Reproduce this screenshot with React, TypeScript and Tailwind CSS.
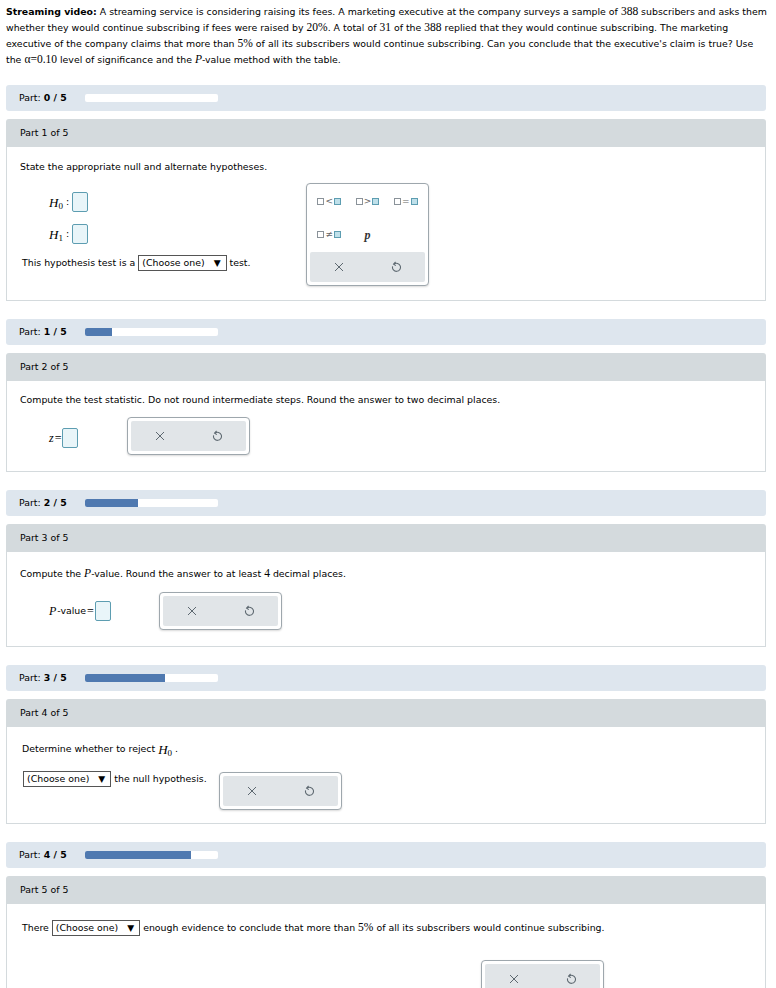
import React from 'react';

const serif = "font-['Liberation_Serif',serif] leading-none";
const num = `${serif} text-[11.5px]`;

// Progress strip shown above each part
const Progress: React.FC<{ done: number }> = ({ done }) => (
  <div className="h-[26px] rounded-[3px] bg-[#dee6ee] flex items-center pl-[13px]">
    <span className="w-[66px]">
      Part: <b>{done} / 5</b>
    </span>
    <div className="w-[133px] h-[8px] bg-white rounded-[2px] overflow-hidden">
      <div className="h-full bg-[#4f79b0]" style={{ width: `${(done / 5) * 100}%` }} />
    </div>
  </div>
);

const AnswerBox: React.FC = () => (
  <span className="inline-block w-[16px] h-[20px] rounded-[2px] border border-[#5d9db1] bg-[#e9f5f9] align-middle" />
);

const Choose: React.FC = () => (
  <span className="inline-flex items-center h-[16px] border border-[#555] pl-[3px] pr-[5px] gap-[9px] align-middle">
    <span>(Choose one)</span>
    <span className="text-[9px]">▼</span>
  </span>
);

const XIcon = () => (
  <svg width="10" height="10" viewBox="0 0 10 10" className="text-[#5d6870]">
    <path d="M1 1 L9 9 M9 1 L1 9" stroke="currentColor" strokeWidth="1" fill="none" />
  </svg>
);

const UndoIcon = () => (
  <svg width="10" height="12" viewBox="0 0 10 12" className="text-[#5d6870]">
    <path d="M3 3.2 A4 4 0 1 1 1.6 5.4" stroke="currentColor" strokeWidth="1.1" fill="none" />
    <path d="M4.6 1 L2.6 3.1 L4.8 4.6" stroke="currentColor" strokeWidth="1.1" fill="none" />
  </svg>
);

const ButtonBar: React.FC = () => (
  <div className="h-[30px] bg-[#e1e5e8] rounded-[2px] flex items-center justify-around">
    <XIcon />
    <UndoIcon />
  </div>
);

const Palette: React.FC<{ className?: string; children?: React.ReactNode }> = ({ className = '', children }) => (
  <div className={`w-[123px] border border-[#9ea7ad] rounded-[4px] p-[3px] shadow-[0_1px_2px_rgba(0,0,0,0.15)] bg-white ${className}`}>
    {children}
    <ButtonBar />
  </div>
);

const Sq: React.FC<{ teal?: boolean }> = ({ teal }) => (
  <span
    className={`inline-block w-[7px] h-[7px] border ${
      teal ? 'border-[#5d9db1] bg-[#bfe0ea]' : 'border-[#8a9299] bg-white'
    }`}
  />
);

const Rel: React.FC<{ op: string }> = ({ op }) => (
  <span className="inline-flex items-center gap-[1px] text-[#666] text-[9px] h-[9px]">
    <Sq />
    <span className="leading-none">{op}</span>
    <Sq teal />
  </span>
);

const Section: React.FC<{ done: number; n: number; children: React.ReactNode; last?: boolean }> = ({
  done,
  n,
  children,
  last,
}) => (
  <div className={last ? '' : 'mb-[18px]'}>
    <Progress done={done} />
    <div className="mt-[8px] h-[28px] bg-[#d4dadd] rounded-t-[3px] flex items-center pl-[14px]">
      Part {n} of 5
    </div>
    <div className="border border-t-0 border-[#d4dadd]">{children}</div>
  </div>
);

const H: React.FC<{ sub: string }> = ({ sub }) => (
  <span className={`${serif} italic text-[13px]`}>
    H<sub className="text-[9px] not-italic">{sub}</sub>
  </span>
);

export default function App() {
  return (
    <div className="pl-[6px] pr-[10px] pt-[4px] font-['DejaVu_Sans',sans-serif] text-[9.4px] text-black leading-4 bg-white min-h-[988px]">
      <p className="leading-[16px] -mr-[3px]">
        <b>Streaming video:</b> A streaming service is considering raising its fees. A marketing executive at the company
        surveys a sample of <span className={num}>388</span> subscribers and asks them whether they would continue
        subscribing if fees were raised by <span className={num}>20%</span>. A total of <span className={num}>31</span> of
        the <span className={num}>388</span> replied that they would continue subscribing. The marketing executive of the
        company claims that more than <span className={num}>5%</span> of all its subscribers would continue subscribing. Can
        you conclude that the executive's claim is true? Use the <span className={num}>α=0.10</span> level of significance
        and the <span className={`${num} italic`}>P</span>-value method with the table.
      </p>

      <div className="mt-[17px]">
        <Section done={0} n={1}>
          <div className="pl-[13px] pt-[12px] pb-[14px] flex">
            <div className="w-[286px]">
              <p>State the appropriate null and alternate hypotheses.</p>
              <div className="mt-[16px] pl-[29px] flex items-center gap-[3px] h-[22px]">
                <H sub="0" />
                <span>:</span>
                <AnswerBox />
              </div>
              <div className="mt-[10px] pl-[29px] flex items-center gap-[3px] h-[22px]">
                <H sub="1" />
                <span>:</span>
                <AnswerBox />
              </div>
              <div className="mt-[10px] pl-[2px] flex items-center gap-[3px]">
                <span>This hypothesis test is a</span>
                <Choose />
                <span>test.</span>
              </div>
            </div>
            <Palette className="mt-[24px]">
              <div className="grid grid-cols-3 justify-items-center items-center pt-[10px] pb-[13px] gap-y-[24px]">
                <Rel op="<" />
                <Rel op=">" />
                <Rel op="=" />
                <Rel op="≠" />
                <span className={`${serif} italic text-[12px] text-[#333] font-bold h-[9px] flex items-center`}>p</span>
              </div>
            </Palette>
          </div>
        </Section>

        <Section done={1} n={2}>
          <div className="pl-[13px] pt-[11px] pb-[16px]">
            <p>Compute the test statistic. Do not round intermediate steps. Round the answer to two decimal places.</p>
            <div className="mt-[9px] flex items-center">
              <div className="w-[107px] pl-[29px] flex items-center gap-[1px] pt-[4px]">
                <span className={`${serif} italic text-[12px]`}>z</span>
                <span className={`${serif} text-[12px]`}>=</span>
                <AnswerBox />
              </div>
              <Palette />
            </div>
          </div>
        </Section>

        <Section done={2} n={3}>
          <div className="pl-[13px] pt-[14px] pb-[16px]">
            <p>
              Compute the <span className={`${num} italic`}>P</span>-value. Round the answer to at least{' '}
              <span className={num}>4</span> decimal places.
            </p>
            <div className="mt-[10px] flex items-center">
              <div className="w-[139px] pl-[29px] flex items-center gap-[1px]">
                <span className={`${serif} italic text-[12px]`}>P</span>
                <span>-value</span>
                <span className={`${serif} text-[12px]`}>=</span>
                <AnswerBox />
              </div>
              <Palette />
            </div>
          </div>
        </Section>

        <Section done={3} n={4}>
          <div className="pl-[15px] pt-[14px] pb-[13px]">
            <p className="flex items-center gap-[3px]">
              <span>Determine whether to reject</span>
              <H sub="0" />
              <span>.</span>
            </p>
            <div className="mt-[14px] flex items-start">
              <div className="w-[197px] flex items-center gap-[3px] pl-[1px]">
                <Choose />
                <span>the null hypothesis.</span>
              </div>
              <Palette className="mt-[1px]" />
            </div>
          </div>
        </Section>

        <Section done={4} n={5} last>
          <div className="pl-[15px] pt-[16px] pb-[16px]">
            <div className="flex items-center gap-[3px]">
              <span>There</span>
              <Choose />
              <span>
                enough evidence to conclude that more than <span className={num}>5%</span> of all its subscribers would
                continue subscribing.
              </span>
            </div>
            <div className="mt-[24px] pl-[459px]">
              <Palette />
            </div>
          </div>
        </Section>
      </div>
    </div>
  );
}
